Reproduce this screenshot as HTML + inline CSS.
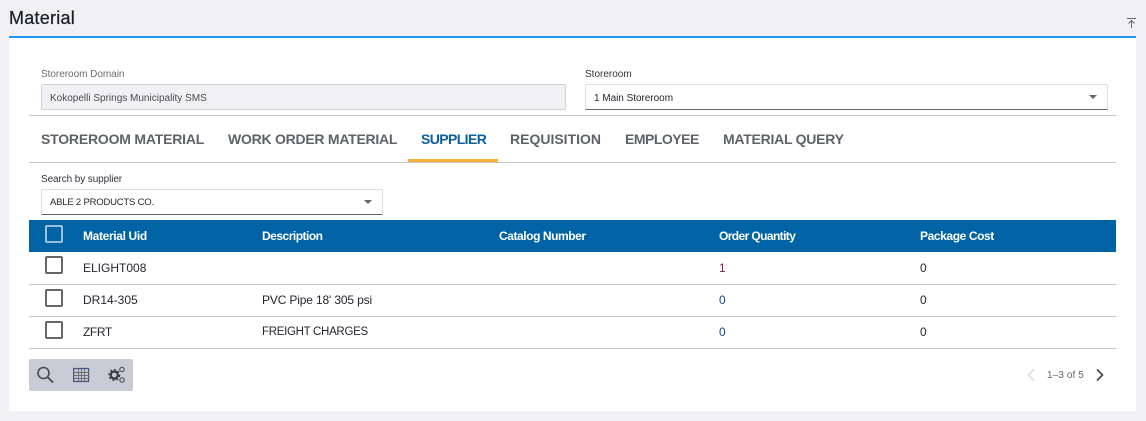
<!DOCTYPE html>
<html><head><meta charset="utf-8">
<style>
html,body{margin:0;padding:0;width:1146px;height:421px;overflow:hidden;background:#f0f0f5;font-family:"Liberation Sans",sans-serif;color:#212529}
.a{position:absolute;white-space:nowrap}
.line{position:absolute;height:1px;background:#c6c6c6;left:29px;width:1087px}
.tab{position:absolute;top:131px;font-size:14px;line-height:16px;font-weight:bold;color:#5f6368;white-space:nowrap}
.th{position:absolute;top:229px;font-size:12px;line-height:14px;font-weight:bold;color:#fff;white-space:nowrap}
.td{position:absolute;font-size:12px;line-height:14px;color:#26262e;white-space:nowrap}
.cb{position:absolute;left:45px;width:14px;height:14px;border:2px solid #666;border-radius:2px;background:#fff}
</style></head><body>
<div class="a" style="left:9px;top:8px;font-size:18px;line-height:21px;color:#1c2026;letter-spacing:.25px;-webkit-text-stroke:.25px #1c2026">Material</div>
<svg class="a" style="left:1126px;top:17px" width="11" height="12" viewBox="0 0 11 12"><path d="M1 1.5H10M5.5 11V3.5M2.5 6.5L5.5 3.5L8.5 6.5" fill="none" stroke="#666" stroke-width="1"/></svg>
<div class="a" style="left:9px;top:38px;width:1127px;height:373px;background:#fff"></div>
<div class="a" style="left:9px;top:36px;width:1127px;height:2px;background:#2196f3"></div>

<div class="a" style="left:41px;top:69px;font-size:10px;line-height:12px;color:#6b6b6b;letter-spacing:-.03px">Storeroom Domain</div>
<div class="a" style="left:41px;top:84px;width:523px;height:24px;background:#f0f0f5;border:1px solid #d2d2d6;border-radius:2px"></div>
<div class="a" style="left:50px;top:92px;font-size:10px;line-height:13px;color:#4a4a52">Kokopelli Springs Municipality SMS</div>

<div class="a" style="left:585px;top:69px;font-size:10px;line-height:12px;color:#30343a">Storeroom</div>
<div class="a" style="left:585px;top:84px;width:521px;height:24px;background:#fff;border:1px solid #dedede;border-bottom:1px solid #666;border-radius:2px 2px 0 0"></div>
<div class="a" style="left:594px;top:92px;font-size:10px;line-height:13px;color:#26262e;letter-spacing:-.03px">1 Main Storeroom</div>
<div class="a" style="left:1089px;top:95px;width:0;height:0;border-left:4.5px solid transparent;border-right:4.5px solid transparent;border-top:4.5px solid #666"></div>

<div class="line" style="top:115px;height:1px"></div>
<div class="tab" style="left:41px;letter-spacing:-.2px">STOREROOM MATERIAL</div>
<div class="tab" style="left:228px;letter-spacing:-.25px">WORK ORDER MATERIAL</div>
<div class="tab" style="left:421px;color:#0a5f9e;letter-spacing:-.6px">SUPPLIER</div>
<div class="tab" style="left:510px;letter-spacing:0">REQUISITION</div>
<div class="tab" style="left:625px;letter-spacing:-.5px">EMPLOYEE</div>
<div class="tab" style="left:723px;letter-spacing:-.25px">MATERIAL QUERY</div>
<div class="a" style="left:408px;top:159px;width:90px;height:3px;background:#f9ae35"></div>
<div class="line" style="top:162px"></div>

<div class="a" style="left:41px;top:174px;font-size:10px;line-height:12px;color:#30343a;letter-spacing:-.1px">Search by supplier</div>
<div class="a" style="left:41px;top:189px;width:340px;height:24px;background:#fff;border:1px solid #dedede;border-bottom:1px solid #666;border-radius:2px 2px 0 0"></div>
<div class="a" style="left:50px;top:196px;font-size:9.5px;line-height:13px;color:#26262e;letter-spacing:-.2px">ABLE 2 PRODUCTS CO.</div>
<div class="a" style="left:364px;top:200px;width:0;height:0;border-left:4.5px solid transparent;border-right:4.5px solid transparent;border-top:4.5px solid #666"></div>

<div class="a" style="left:29px;top:220px;width:1087px;height:32px;background:#0063a5"></div>
<div class="cb" style="top:225px;background:transparent;border-color:#9cc0d9"></div>
<div class="th" style="left:83px;letter-spacing:-.35px">Material Uid</div>
<div class="th" style="left:262px;letter-spacing:-.5px">Description</div>
<div class="th" style="left:499px;letter-spacing:-.43px">Catalog Number</div>
<div class="th" style="left:719px;letter-spacing:-.6px">Order Quantity</div>
<div class="th" style="left:920px;letter-spacing:-.4px">Package Cost</div>

<div class="cb" style="top:256px"></div>
<div class="td" style="left:83px;top:261px">ELIGHT008</div>
<div class="td" style="left:719px;top:261px;color:#7a1f5c">1</div>
<div class="td" style="left:920px;top:261px">0</div>
<div class="line" style="top:284px"></div>

<div class="cb" style="top:289px"></div>
<div class="td" style="left:83px;top:293px">DR14-305</div>
<div class="td" style="left:262px;top:293px;letter-spacing:-.15px">PVC Pipe 18' 305 psi</div>
<div class="td" style="left:719px;top:293px;color:#1f3f8f">0</div>
<div class="td" style="left:920px;top:293px">0</div>
<div class="line" style="top:316px"></div>

<div class="cb" style="top:321px"></div>
<div class="td" style="left:83px;top:325px;letter-spacing:-.4px">ZFRT</div>
<div class="td" style="left:262px;top:325px;font-size:11.5px;letter-spacing:-.3px">FREIGHT CHARGES</div>
<div class="td" style="left:719px;top:325px;color:#1f3f8f">0</div>
<div class="td" style="left:920px;top:325px">0</div>
<div class="line" style="top:348px"></div>

<div class="a" style="left:29px;top:359px;width:104px;height:32px;background:#c9cbd6;border-radius:2px"></div>
<svg class="a" style="left:29px;top:359px" width="104" height="32" viewBox="0 0 104 32">
<circle cx="14.5" cy="14" r="5.5" fill="none" stroke="#4a4a50" stroke-width="1.6"/>
<path d="M18.5 18L24 23.5" stroke="#4a4a50" stroke-width="1.8"/>
<rect x="44.6" y="9.5" width="15" height="13" fill="#c6c6d0" stroke="#45557c" stroke-width="1.2"/>
<path d="M45 13.5H60M45 16.5H60M45 19.5H60M49.5 10V22M52.5 10V22M55.5 10V22" stroke="#6e6e76" stroke-width=".9" fill="none"/>
<circle cx="85.3" cy="16" r="3.5" fill="none" stroke="#3c3c42" stroke-width="2.2"/>
<circle cx="85.3" cy="16" r="5.2" fill="none" stroke="#3c3c42" stroke-width="1.6" stroke-dasharray="2 2"/>
<circle cx="93" cy="10.5" r="2.2" fill="none" stroke="#555" stroke-width="1.2"/>
<circle cx="93" cy="21" r="2.2" fill="none" stroke="#555" stroke-width="1.2"/>
</svg>

<svg class="a" style="left:1025px;top:368px" width="12" height="14" viewBox="0 0 12 14"><path d="M9 1.5L3.5 7L9 12.5" fill="none" stroke="#dcdcdc" stroke-width="1.6"/></svg>
<div class="a" style="left:1047px;top:369px;font-size:10px;line-height:13px;color:#666;letter-spacing:.1px">1–3 of 5</div>
<svg class="a" style="left:1094px;top:368px" width="12" height="14" viewBox="0 0 12 14"><path d="M3 1.5L8.5 7L3 12.5" fill="none" stroke="#444" stroke-width="1.6"/></svg>
</body></html>
